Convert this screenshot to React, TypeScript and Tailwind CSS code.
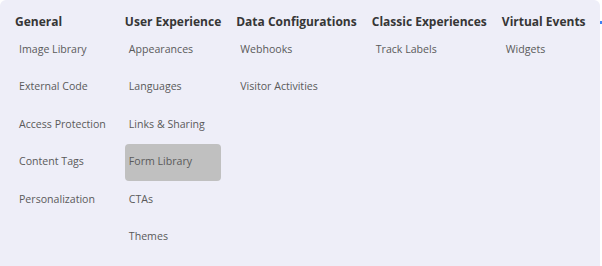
const columns = [
	{
		title: "General",
		items: [
			"Image Library",
			"External Code",
			"Access Protection",
			"Content Tags",
			"Personalization",
		],
	},
	{
		title: "User Experience",
		items: [
			"Appearances",
			"Languages",
			"Links & Sharing",
			"Form Library",
			"CTAs",
			"Themes",
		],
	},
	{
		title: "Data Configurations",
		items: ["Webhooks", "Visitor Activities"],
	},
	{ title: "Classic Experiences", items: ["Track Labels"] },
	{ title: "Virtual Events", items: ["Widgets"] },
];

const ACTIVE = "Form Library";

export default function App() {
	return (
		<div
			className="relative h-[266px] w-[602px] overflow-hidden bg-white"
			style={{ fontFamily: '"Open Sans", "Liberation Sans", sans-serif' }}
		>
			{/* menu panel */}
			<div className="h-[290px] w-[600px] rounded-[6px] bg-[#eeeef8] pt-[13px] pl-[15px]">
				<div className="flex gap-[15px]">
					{columns.map((col) => (
						<div className="flex flex-col" key={col.title}>
							<h3 className="h-[18px] whitespace-nowrap font-bold text-[#363636] text-[12px] leading-[18px]">
								{col.title}
							</h3>
							{col.items.map((item) => (
								<div
									className={`flex h-[37.5px] items-center whitespace-nowrap rounded-[4px] px-[4px] text-[#5a5a5a] text-[10.6px] ${
										item === ACTIVE ? "bg-[#c0c0c0]" : ""
									}`}
									key={item}
								>
									{item}
								</div>
							))}
						</div>
					))}
				</div>
			</div>
			<div className="absolute top-[21px] left-[600px] h-[3px] w-[2px] bg-[#3b82f6]" />
		</div>
	);
}
